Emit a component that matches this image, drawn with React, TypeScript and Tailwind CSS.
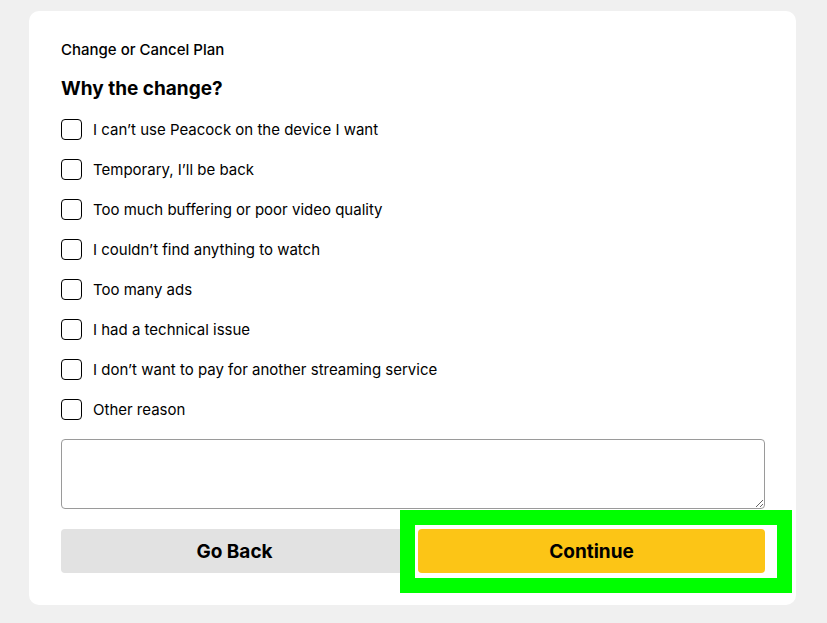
import React from "react";

const reasons = [
  "I can’t use Peacock on the device I want",
  "Temporary, I’ll be back",
  "Too much buffering or poor video quality",
  "I couldn’t find anything to watch",
  "Too many ads",
  "I had a technical issue",
  "I don’t want to pay for another streaming service",
  "Other reason",
];

const App = () => {
  return (
    <div
      className="min-h-[623px] bg-[#f0f0f0] pt-[11px] pl-[29px] pr-[31px] pb-[18px] text-black"
      style={{ fontFamily: "Inter, 'Noto Sans', sans-serif" }}
    >
      <div className="bg-white rounded-[10px] pt-[29px] pl-[32px] pr-[31px] pb-[32px] flex flex-col">
        <p className="text-[15px] leading-[20px] font-medium">Change or Cancel Plan</p>
        <h1 className="mt-[17px] text-[19px] leading-[24px] font-bold">Why the change?</h1>

        <ul className="mt-[8px] flex flex-col">
          {reasons.map((r) => (
            <li key={r} className="h-[40px] flex items-center gap-[11px]">
              <input
                type="checkbox"
                className="appearance-none w-[21px] h-[21px] border border-black rounded-[4px] bg-white shrink-0"
              />
              <span className="pt-[2px] text-[15px] leading-[20px]">{r}</span>
            </li>
          ))}
        </ul>

        <textarea className="mt-[10px] h-[70px] w-full border border-[#9a9a9a] rounded-[4px] bg-white" />

        <div className="mt-[20px] grid grid-cols-2 gap-[10px]">
          <button className="h-[44px] pt-[2px] rounded-[4px] bg-[#e2e2e2] text-[19px] font-bold">
            Go Back
          </button>
          <div className="relative">
            <div className="absolute left-[-18px] top-[-19px] w-[392px] h-[83px] border-[15px] border-[#00ff00] bg-white" />
            <button className="relative z-10 w-full h-[44px] pt-[2px] rounded-[4px] bg-[#fcc516] text-[19px] font-bold">
              Continue
            </button>
          </div>
        </div>
      </div>
    </div>
  );
};

export default App;
